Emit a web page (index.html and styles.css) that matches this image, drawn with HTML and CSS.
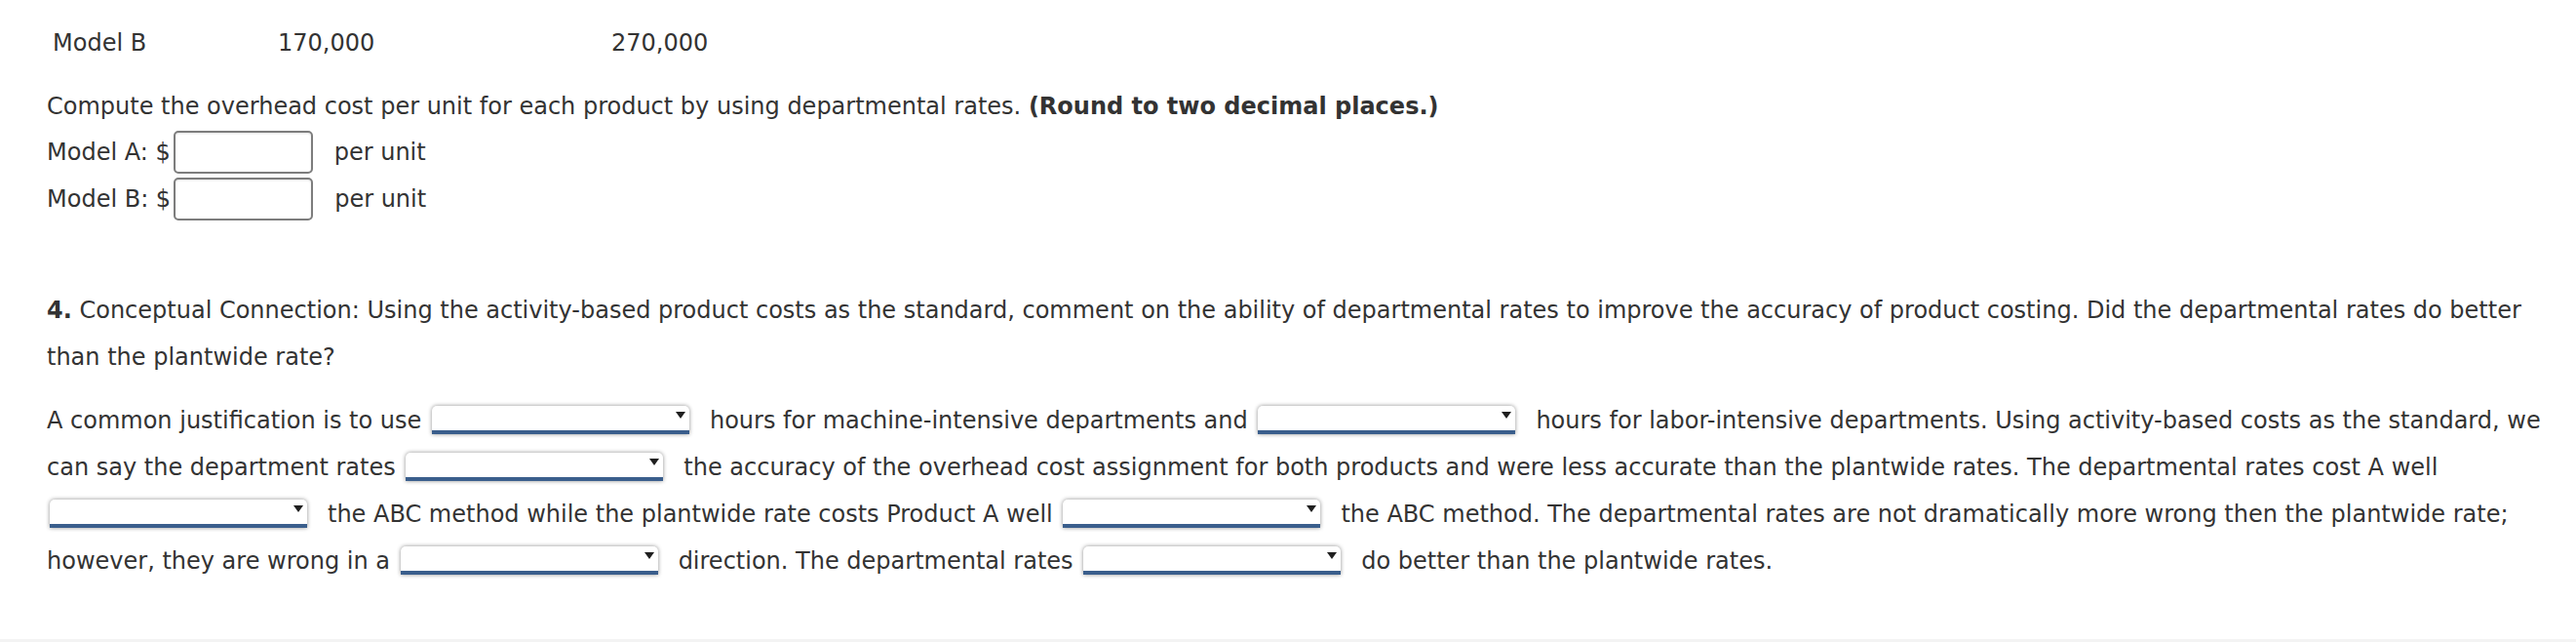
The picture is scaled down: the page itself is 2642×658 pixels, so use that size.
FILE: index.html
```html
<!DOCTYPE html>
<html lang="en">
<head>
<meta charset="utf-8">
<title>Departmental rates</title>
<link rel="stylesheet" href="styles.css">
</head>
<body>
<div class="page">
  <div class="data-row"><span>Model B</span><span>170,000</span><span>270,000</span></div>
  <p class="prompt">Compute the overhead cost per unit for each product by using departmental rates. <strong>(Round to two decimal places.)</strong></p>
  <div class="answer-line"><span class="label">Model A: $</span><input class="num-input" type="text" aria-label="Model A"><span class="unit">per unit</span></div>
  <div class="answer-line"><span class="label">Model B: $</span><input class="num-input" type="text" aria-label="Model B"><span class="unit">per unit</span></div>
  <p class="question"><strong>4.</strong> Conceptual Connection: Using the activity-based product costs as the standard, comment on the ability of departmental rates to improve the accuracy of product costing. Did the departmental rates do better than the plantwide rate?</p>
  <p class="fill">A common justification is to use <span class="dd"><svg class="caret" viewBox="0 0 10 7"><path d="M0 0H10L5 7Z"/></svg></span>hours for machine-intensive departments and <span class="dd"><svg class="caret" viewBox="0 0 10 7"><path d="M0 0H10L5 7Z"/></svg></span>hours for labor-intensive departments. Using activity-based costs as the standard, we can say the department rates <span class="dd"><svg class="caret" viewBox="0 0 10 7"><path d="M0 0H10L5 7Z"/></svg></span>the accuracy of the overhead cost assignment for both products and were less accurate than the plantwide rates. The departmental rates cost A well <span class="dd"><svg class="caret" viewBox="0 0 10 7"><path d="M0 0H10L5 7Z"/></svg></span>the ABC method while the plantwide rate costs Product A well <span class="dd"><svg class="caret" viewBox="0 0 10 7"><path d="M0 0H10L5 7Z"/></svg></span>the ABC method. The departmental rates are not dramatically more wrong then the plantwide rate; however, they are wrong in a <span class="dd"><svg class="caret" viewBox="0 0 10 7"><path d="M0 0H10L5 7Z"/></svg></span>direction. The departmental rates <span class="dd"><svg class="caret" viewBox="0 0 10 7"><path d="M0 0H10L5 7Z"/></svg></span>do better than the plantwide rates.</p>
</div>
</body>
</html>
```

FILE: styles.css
```css
html, body {
  margin: 0;
  padding: 0;
  background: #ffffff;
}

body {
  font-family: "DejaVu Sans", Verdana, sans-serif;
  font-size: 24px;
  color: #333333;
}

.page {
  box-sizing: border-box;
  width: 2642px;
  height: 658px;
  padding: 20px 16px 0 48px;
  border-bottom: 3px solid #f3f3f3;
}

.data-row {
  display: grid;
  grid-template-columns: 231px 342px auto;
  padding-left: 6px;
  height: 48px;
  line-height: 48px;
}

.prompt {
  margin: 18px 0 0;
  line-height: 46px;
}

.prompt strong,
.question strong {
  font-weight: bold;
}

.answer-line {
  display: flex;
  align-items: center;
  height: 48px;
  line-height: 48px;
}

.num-input {
  box-sizing: border-box;
  width: 143px;
  height: 44px;
  margin: 0 15px 0 3px;
  padding: 0 6px;
  border: 2px solid #7d7d7d;
  border-radius: 5px;
  background: #ffffff;
  box-shadow: inset 0 1px 2px rgba(0, 0, 0, 0.12);
  font: inherit;
}

.unit {
  padding-left: 7px;
}

.question {
  margin: 66px 0 0;
  line-height: 48px;
}

.fill {
  margin: 17px 0 0;
  line-height: 48px;
}

.dd {
  position: relative;
  display: inline-block;
  box-sizing: border-box;
  width: 264px;
  height: 29px;
  margin: 0 21px 0 3px;
  vertical-align: -6px;
  background: #ffffff;
  border-bottom: 4px solid #3a5e8c;
  border-radius: 5px 5px 0 0;
  box-shadow: 0 0 4px rgba(0, 0, 0, 0.45);
}

.caret {
  position: absolute;
  top: 6px;
  right: 4px;
  width: 10px;
  height: 7px;
  fill: #1f1f1f;
}
```
